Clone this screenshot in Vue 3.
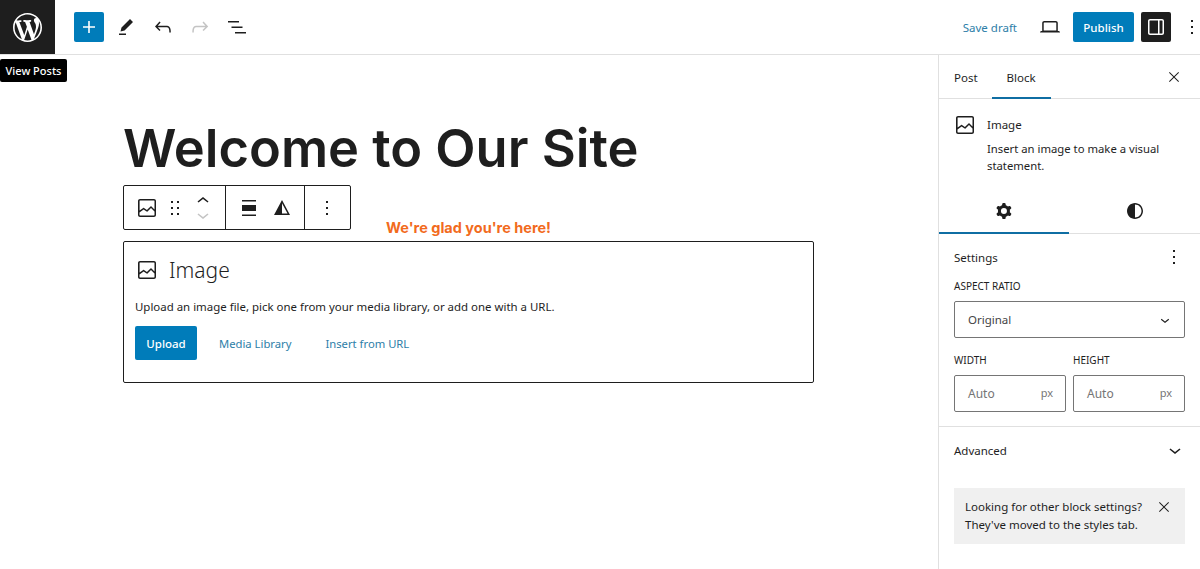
<script setup>
const icons = {
  image: 'M19 3H5c-1.1 0-2 .9-2 2v14c0 1.1.9 2 2 2h14c1.1 0 2-.9 2-2V5c0-1.1-.9-2-2-2zM5 4.5h14c.3 0 .5.2.5.5v8.4l-3-2.9c-.3-.3-.8-.3-1 0L11.9 14 9 12c-.3-.2-.6-.2-.8 0l-3.6 2.6V5c-.1-.3.1-.5.4-.5zm14 15H5c-.3 0-.5-.2-.5-.5v-2.4l4.1-3 3 1.9c.3.2.7.2.9-.1L16 12l3.5 3.4V19c0 .3-.2.5-.5.5z',
  plus: 'M18 11.2h-5.2V6h-1.6v5.2H6v1.6h5.2V18h1.6v-5.2H18z',
  pencil: 'm19 7-3-3-8.5 8.5-1 4 4-1L19 7Zm-7 11.5H5V20h7v-1.5Z',
  undo: 'M18.3 11.7c-.6-.6-1.4-.9-2.3-.9H6.7l2.9-3.3-1.1-1-4.5 5L8.5 16l1-1-2.7-2.7H16c.5 0 .9.2 1.3.5 1 1 1 3.4 1 4.5v.3h1.5v-.2c0-1.5 0-4.3-1.5-5.7z',
  redo: 'M15.6 6.5l-1.1 1 2.9 3.3H8c-.9 0-1.7.3-2.3.9-1.4 1.5-1.4 4.2-1.4 5.6v.2h1.5v-.3c0-1.1 0-3.5 1-4.5.3-.3.7-.5 1.3-.5h9.2L14.5 15l1.1 1.1 4.6-4.6-4.6-5z',
  list: 'M3 6h11v1.5H3V6Zm3.5 5.5h11V13h-11v-1.5ZM21 17H10v1.5h11V17Z',
  close: 'm13.06 12 6.47-6.47-1.06-1.06L12 10.94 5.53 4.47 4.47 5.53 10.94 12l-6.47 6.47 1.06 1.06L12 13.06l6.47 6.47 1.06-1.06L13.06 12Z',
  sidebar: 'M18 4H6c-1.1 0-2 .9-2 2v12c0 1.1.9 2 2 2h12c1.1 0 2-.9 2-2V6c0-1.1-.9-2-2-2zm-4 14.5H6c-.3 0-.5-.2-.5-.5V6c0-.3.2-.5.5-.5h8v13zm4.5-.5c0 .3-.2.5-.5.5h-2.5v-13H18c.3 0 .5.2.5.5v12z',
  dots: 'M13 19h-2v-2h2v2zm0-6h-2v-2h2v2zm0-6h-2V5h2v2z',
  drag: 'M8 7h2V5H8v2zm0 6h2v-2H8v2zm0 6h2v-2H8v2zm6-14v2h2V5h-2zm0 8h2v-2h-2v2zm0 6h2v-2h-2v2z',
  up: 'M6.5 12.4L12 8l5.5 4.4-.9 1.2L12 10l-4.5 3.6-1-1.2z',
  down: 'M17.5 11.6L12 16l-5.5-4.4.9-1.2L12 14l4.5-3.6 1 1.2z',
  align: 'M19 5.5H5V4h14v1.5ZM19 20H5v-1.5h14V20ZM5 9h14v6H5V9Z',
  filter: 'M12 4 4 19h16L12 4zm0 3.2 5.5 10.3H12V7.2z',
  cog: 'M10.289 4.836A1 1 0 0111.275 4h1.306a1 1 0 01.987.836l.244 1.466c.787.26 1.503.679 2.108 1.218l1.393-.522a1 1 0 011.216.437l.653 1.13a1 1 0 01-.23 1.273l-1.148.944a6.025 6.025 0 010 2.435l1.149.946a1 1 0 01.23 1.272l-.653 1.13a1 1 0 01-1.216.437l-1.394-.522c-.605.54-1.32.958-2.108 1.218l-.244 1.466a1 1 0 01-.987.836h-1.306a1 1 0 01-.986-.836l-.244-1.466a5.995 5.995 0 01-2.108-1.218l-1.394.522a1 1 0 01-1.217-.436l-.653-1.131a1 1 0 01.23-1.272l1.149-.946a6.026 6.026 0 010-2.435l-1.148-.944a1 1 0 01-.23-1.272l.653-1.131a1 1 0 011.217-.437l1.393.522a5.994 5.994 0 012.108-1.218l.244-1.466zM14.929 12a3 3 0 11-6 0 3 3 0 016 0z',
  half: 'M12 4c-4.4 0-8 3.6-8 8s3.6 8 8 8 8-3.6 8-8-3.6-8-8-8zm0 14.5V5.5c3.6 0 6.5 2.9 6.5 6.5s-2.9 6.5-6.5 6.5z',
  laptop: 'M20.5 16h-.7V8c0-1.1-.9-2-2-2H6.2c-1.1 0-2 .9-2 2v8h-.7c-.8 0-1.5.7-1.5 1.5h20c0-.8-.7-1.5-1.5-1.5zM5.7 8c0-.3.2-.5.5-.5h11.6c.3 0 .5.2.5.5v7.6H5.7V8z'
}
const wpLogo = 'M20 10c0-5.51-4.49-10-10-10C4.48 0 0 4.49 0 10c0 5.52 4.48 10 10 10 5.51 0 10-4.48 10-10zM7.78 15.37L4.37 6.22c.55-.02 1.17-.08 1.17-.08.5-.06.44-1.13-.06-1.11 0 0-1.45.11-2.37.11-.18 0-.37 0-.58-.01C4.12 2.69 6.87 1.11 10 1.11c2.33 0 4.45.87 6.05 2.34-.68-.11-1.65.39-1.65 1.58 0 .74.45 1.36.9 2.1.35.61.55 1.36.55 2.46 0 1.49-1.4 5-1.4 5l-3.03-8.37c.54-.02.82-.17.82-.17.5-.05.44-1.25-.06-1.22 0 0-1.44.12-2.38.12-.87 0-2.33-.12-2.33-.12-.5-.03-.56 1.2-.06 1.22l.92.08 1.26 3.41zM17.41 10c.24-.64.74-1.87.43-4.25.7 1.29 1.05 2.71 1.05 4.25 0 3.29-1.73 6.24-4.4 7.78.97-2.59 1.94-5.2 2.92-7.78zM6.1 18.09C3.12 16.65 1.11 13.53 1.11 10c0-1.3.23-2.48.72-3.59C3.25 10.3 4.67 14.2 6.1 18.09zm4.03-6.63l2.58 6.98c-.86.29-1.76.45-2.71.45-.79 0-1.57-.11-2.29-.33.81-2.38 1.62-4.74 2.42-7.1z'
</script>

<template>
  <div class="editor">
    <header class="topbar">
      <a class="logo">
        <svg viewBox="0 0 20 20" width="29" height="29"><path :d="wpLogo" fill="#fff" fill-rule="evenodd" /></svg>
      </a>
      <div class="tools">
        <button class="btn-square blue"><svg viewBox="0 0 24 24" width="24" height="24"><path :d="icons.plus" /></svg></button>
        <svg class="tool" viewBox="0 0 24 24" width="24" height="24"><path :d="icons.pencil" /></svg>
        <svg class="tool" viewBox="0 0 24 24" width="24" height="24"><path :d="icons.undo" /></svg>
        <svg class="tool muted" viewBox="0 0 24 24" width="24" height="24"><path :d="icons.redo" /></svg>
        <svg class="tool" viewBox="0 0 24 24" width="24" height="24"><path :d="icons.list" /></svg>
      </div>
      <div class="actions">
        <span class="link save">Save draft</span>
        <svg class="laptop" viewBox="0 0 24 24" width="24" height="24"><path :d="icons.laptop" /></svg>
        <button class="publish">Publish</button>
        <button class="btn-square dark"><svg viewBox="0 0 24 24" width="24" height="24"><path :d="icons.sidebar" /></svg></button>
        <svg class="more" viewBox="0 0 24 24" width="24" height="24"><path :d="icons.dots" /></svg>
      </div>
    </header>

    <div class="tooltip">View Posts</div>

    <div class="body">
      <main class="canvas">
        <div class="content">
          <h1>Welcome to Our Site</h1>
          <p class="tagline">We're glad you're here!</p>
          <div class="block-toolbar">
            <div class="group first">
              <svg viewBox="0 0 24 24" width="24" height="24"><path :d="icons.image" /></svg>
              <svg class="drag" viewBox="0 0 24 24" width="24" height="24"><path :d="icons.drag" /></svg>
              <div class="movers">
                <svg viewBox="0 5 24 14" width="24" height="14"><path :d="icons.up" /></svg>
                <svg class="muted" viewBox="0 5 24 14" width="24" height="14"><path :d="icons.down" /></svg>
              </div>
            </div>
            <div class="group second">
              <svg viewBox="0 0 24 24" width="24" height="24"><path :d="icons.align" /></svg>
              <svg viewBox="0 0 24 24" width="24" height="24"><path :d="icons.filter" /></svg>
            </div>
            <div class="group third">
              <svg viewBox="0 0 24 24" width="24" height="24"><path :d="icons.dots" /></svg>
            </div>
          </div>
          <section class="placeholder">
            <div class="ph-title">
              <svg viewBox="0 0 24 24" width="24" height="24"><path :d="icons.image" /></svg>
              <span>Image</span>
            </div>
            <p class="ph-text">Upload an image file, pick one from your media library, or add one with a URL.</p>
            <div class="ph-actions">
              <button class="upload">Upload</button>
              <span class="link media">Media Library</span>
              <span class="link insert">Insert from URL</span>
            </div>
          </section>
        </div>
      </main>

      <aside class="sidebar">
        <div class="tabs">
          <span class="tab post">Post</span>
          <span class="tab active">Block</span>
          <svg class="tabs-close" viewBox="0 0 24 24" width="16" height="16"><path :d="icons.close" /></svg>
        </div>
        <div class="card">
          <svg viewBox="0 0 24 24" width="24" height="24"><path :d="icons.image" /></svg>
          <div class="card-text">
            <div class="card-name">Image</div>
            <div class="card-desc">Insert an image to make a visual statement.</div>
          </div>
        </div>
        <div class="subtabs">
          <div class="subtab on"><svg viewBox="0 0 24 24" width="24" height="24"><path :d="icons.cog" fill-rule="evenodd" /></svg></div>
          <div class="subtab"><svg viewBox="0 0 24 24" width="24" height="24"><path :d="icons.half" fill-rule="evenodd" /></svg></div>
        </div>
        <section class="panel">
          <div class="panel-head">
            <span>Settings</span>
            <svg viewBox="0 0 24 24" width="24" height="24"><path :d="icons.dots" /></svg>
          </div>
          <label class="caps">ASPECT RATIO</label>
          <div class="select">
            <span>Original</span>
            <svg viewBox="0 0 24 24" width="18" height="18"><path :d="icons.down" /></svg>
          </div>
          <div class="dims">
            <div class="dim">
              <label class="caps">WIDTH</label>
              <div class="field"><span class="auto">Auto</span><span class="unit">px</span></div>
            </div>
            <div class="dim">
              <label class="caps">HEIGHT</label>
              <div class="field"><span class="auto">Auto</span><span class="unit">px</span></div>
            </div>
          </div>
        </section>
        <section class="advanced">
          <span>Advanced</span>
          <svg viewBox="0 0 24 24" width="24" height="24"><path :d="icons.down" /></svg>
        </section>
        <div class="notice">
          <p>Looking for other block settings? They've moved to the styles tab.</p>
          <svg viewBox="0 0 24 24" width="16" height="16"><path :d="icons.close" /></svg>
        </div>
      </aside>
    </div>
  </div>
</template>

<style scoped>
.editor {
  position: relative;
  width: 1200px;
  height: 569px;
  overflow: hidden;
  background: #fff;
  color: #1e1e1e;
  font-family: "Noto Sans", "Open Sans", Arial, sans-serif;
  font-size: 11.5px;
}
svg {
  display: block;
  fill: currentColor;
  flex: none;
}
button {
  border: 0;
  font: inherit;
  padding: 0;
}
.topbar {
  display: flex;
  align-items: center;
  height: 54px;
  border-bottom: 1px solid #e0e0e0;
}
.logo {
  display: flex;
  align-items: center;
  justify-content: center;
  width: 55px;
  height: 54px;
  background: #1e1e1e;
}
.tools {
  display: flex;
  align-items: center;
  margin-left: 19px;
}
.tool {
  margin-left: 13px;
}
.tools .btn-square + .tool {
  margin-left: 10px;
}
.muted {
  color: #c4c4c4;
}
.btn-square {
  display: flex;
  align-items: center;
  justify-content: center;
  width: 30px;
  height: 30px;
  border-radius: 2px;
  color: #fff;
}
.blue {
  background: #007cba;
}
.dark {
  background: #1e1e1e;
}
.actions {
  display: flex;
  align-items: center;
  margin-left: auto;
}
.link {
  color: #2d7ea8;
  white-space: nowrap;
}
.laptop {
  margin-left: 21px;
}
.publish {
  width: 61px;
  height: 30px;
  margin-left: 11px;
  background: #007cba;
  border-radius: 2px;
  color: #fff;
  font-weight: 500;
}
.dark {
  margin-left: 7px;
}
.more {
  margin-left: 9px;
  margin-right: -4px;
}
.tooltip {
  position: absolute;
  left: 0;
  top: 59px;
  height: 23px;
  width: 67px;
  box-sizing: border-box;
  background: #000;
  color: #fff;
  border-radius: 2px;
  line-height: 23px;
  text-align: center;
  font-size: 11px;
  font-weight: 500;
}
.body {
  display: flex;
  height: 514px;
}
.canvas {
  flex: 1;
  min-width: 0;
  padding-left: 123px;
}
.content {
  position: relative;
  width: 691px;
}
h1 {
  margin: 0;
  padding-top: 64px;
  font-family: Inter, "Liberation Sans", sans-serif;
  font-size: 52.4px;
  font-weight: 600;
  line-height: 58px;
  white-space: nowrap;
}
.tagline {
  margin: 0;
  padding-top: 40px;
  line-height: 21px;
  text-align: center;
  color: #f26b1d;
  font-family: Inter, "Liberation Sans", sans-serif;
  font-size: 14.5px;
  font-weight: 700;
}
.block-toolbar {
  position: absolute;
  left: 0;
  top: 130px;
  display: flex;
  height: 45px;
  box-sizing: border-box;
  border: 1px solid #1e1e1e;
  border-radius: 2px;
  background: #fff;
}
.group {
  display: flex;
  align-items: center;
  box-sizing: border-box;
  height: 43px;
  border-right: 1px solid #1e1e1e;
}
.group.first {
  width: 102px;
  padding-left: 11px;
}
.group.second {
  width: 79px;
  padding-left: 11px;
  gap: 9px;
}
.group.third {
  width: 45px;
  padding-left: 10px;
  border-right: 0;
}
.drag {
  margin-left: 4px;
}
.movers {
  margin-left: 4px;
  display: flex;
  flex-direction: column;
}
.placeholder {
  box-sizing: border-box;
  height: 142px;
  margin-top: 3px;
  padding: 16px 11px 0;
  border: 1px solid #1e1e1e;
  border-radius: 2px;
}
.ph-title {
  display: flex;
  align-items: center;
  gap: 10px;
  height: 24px;
  font-size: 21px;
  font-weight: 300;
}
.ph-text {
  margin: 16px 0 0;
  line-height: 18px;
  font-size: 11.45px;
}
.ph-actions {
  display: flex;
  align-items: center;
  margin-top: 10px;
  height: 34px;
}
.upload {
  width: 62px;
  height: 34px;
  background: #007cba;
  color: #fff;
  border-radius: 2px;
  font-weight: 500;
}
.media,
.insert {
  font-size: 11.25px;
}
.media {
  margin-left: 22px;
}
.insert {
  margin-left: 34px;
}
.sidebar {
  box-sizing: border-box;
  width: 262px;
  border-left: 1px solid #e0e0e0;
}
.tabs {
  position: relative;
  display: flex;
  height: 44px;
  box-sizing: border-box;
  border-bottom: 1px solid #e0e0e0;
}
.tab {
  line-height: 45px;
  padding: 0 15px;
}
.tab.post {
  padding-right: 14px;
}
.tab.active {
  box-shadow: inset 0 -2px 0 #0f6ea3;
  height: 44px;
}
.tabs-close {
  position: absolute;
  top: 14px;
  right: 18px;
}
.card {
  display: flex;
  gap: 10px;
  padding: 14px 15px 0 15px;
  height: 89px;
  box-sizing: border-box;
}
.card svg {
  margin-left: -1px;
}
.card-name {
  line-height: 24px;
}
.card-desc {
  line-height: 17px;
  margin-top: 3px;
  font-size: 11.3px;
}
.subtabs {
  display: flex;
  height: 45px;
  border-bottom: 1px solid #e0e0e0;
}
.subtab {
  flex: 1;
  display: flex;
  align-items: center;
  justify-content: center;
  height: 45px;
  padding-top: 1px;
  box-sizing: border-box;
}
.subtab.on {
  flex: none;
  width: 130px;
  box-shadow: 0 1px 0 #0f6ea3, inset 0 -1px 0 #0f6ea3;
}
.panel {
  box-sizing: border-box;
  height: 193px;
  padding: 11px 15px 0;
  border-bottom: 1px solid #e0e0e0;
}
.panel-head {
  display: flex;
  justify-content: space-between;
  align-items: center;
  height: 24px;
  margin-right: -1px;
}
.caps {
  display: block;
  font-size: 10px;
  line-height: 14px;
}
.panel > .caps {
  margin-top: 10px;
}
.select {
  display: flex;
  align-items: center;
  justify-content: space-between;
  box-sizing: border-box;
  height: 37px;
  width: 231px;
  margin-top: 8px;
  padding: 0 13px;
  border: 1px solid #757575;
  border-radius: 2px;
  color: #444;
}
.select svg {
  color: #1e1e1e;
  margin-right: -3px;
}
.dims {
  display: flex;
  gap: 7px;
  margin-top: 15px;
}
.dim {
  width: 112px;
}
.field {
  display: flex;
  align-items: center;
  justify-content: space-between;
  box-sizing: border-box;
  height: 37px;
  margin-top: 8px;
  padding: 0 12px 0 13px;
  border: 1px solid #757575;
  border-radius: 2px;
  color: #757575;
  font-size: 12px;
}
.unit {
  margin-top: -2px;
  font-size: 11px;
}
.advanced {
  display: flex;
  justify-content: space-between;
  align-items: center;
  height: 46px;
  padding: 0 13px 0 15px;
}
.notice {
  display: flex;
  justify-content: space-between;
  box-sizing: border-box;
  width: 231px;
  height: 56px;
  margin: 15px 0 0 15px;
  padding: 10px 13px 0 11px;
  background: #f0f0f0;
}
.notice p {
  margin: 0;
  width: 190px;
  line-height: 18px;
}
.notice svg {
  margin-top: 1px;
}
</style>
